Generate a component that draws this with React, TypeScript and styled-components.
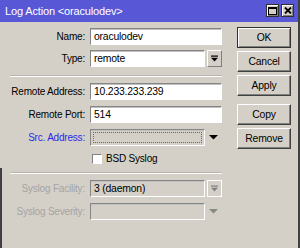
import styled, { createGlobalStyle, css } from 'styled-components';

const GlobalStyle = createGlobalStyle`
  html, body {
    margin: 0;
    padding: 0;
    background: #d4d0c8;
  }
  * { box-sizing: border-box; }
`;

const font = css`
  font-family: "Liberation Sans", Arial, sans-serif;
  font-size: 10px;
  letter-spacing: -0.2px;
`;

const Window = styled.div`
  position: relative;
  width: 300px;
  height: 248px;
  background: #d4d0c8;
  border-right: 2px solid #404040;
  display: flex;
  flex-direction: column;
  overflow: hidden;
  ${font};
`;

const EdgeShadow = styled.div`
  position: absolute;
  left: 0;
  top: 168px;
  bottom: 0;
  width: 2px;
  background: #404040;
`;

const TitleBar = styled.div`
  height: 22px;
  background: #5858d6;
  display: flex;
  align-items: center;
  padding: 0 4px 1px 5px;
  color: #fff;
  font-size: 11px;
  letter-spacing: -0.15px;
`;

const TitleButtons = styled.div`
  margin-left: auto;
  display: flex;
  gap: 2px;
`;

const TitleButton = styled.div`
  width: 13px;
  height: 13px;
  background: #d4d0c8;
  border: 1px solid #303030;
  box-shadow: inset 1px 1px 0 #fff, inset -1px -1px 0 #808080;
  display: flex;
  align-items: center;
  justify-content: center;
`;

const Body = styled.div`
  display: flex;
  padding-top: 6px;
`;

const Form = styled.div`
  width: 226px;
  display: flex;
  flex-direction: column;
`;

const Row = styled.div<{ $mt?: number }>`
  display: flex;
  align-items: center;
  height: 17px;
  margin-top: ${(p) => p.$mt ?? 0}px;
`;

const Label = styled.div<{ $tone?: 'normal' | 'link' | 'disabled' }>`
  width: 85px;
  margin-right: 5px;
  text-align: right;
  white-space: nowrap;
  color: ${(p) =>
    p.$tone === 'link' ? '#2a2ae8' : p.$tone === 'disabled' ? '#a4a4a4' : '#000'};
`;

const Field = styled.div<{ $w: number; $variant?: 'white' | 'gray' | 'dotted' }>`
  width: ${(p) => p.$w}px;
  height: 17px;
  padding: 0 3px;
  display: flex;
  align-items: center;
  white-space: nowrap;
  overflow: hidden;
  font-size: 10.4px;
  background: ${(p) => (p.$variant === 'white' || !p.$variant ? '#fff' : '#d4d0c8')};
  border-top: 1px solid #858585;
  border-left: 1px solid #858585;
  border-bottom: 1px solid #fff;
  border-right: 1px solid #fff;
  box-shadow: inset 0 1px 0 #c0c0c0;
  position: relative;
  ${(p) =>
    p.$variant === 'dotted' &&
    css`
      &::after {
        content: '';
        position: absolute;
        inset: 2px;
        border: 1px dotted #6a6a6a;
      }
    `}
`;

const DropButton = styled.div<{ $disabled?: boolean }>`
  width: 15px;
  height: 17px;
  margin-left: 2px;
  background: #d4d0c8;
  border-top: 1px solid #fff;
  border-left: 1px solid #fff;
  border-right: 1px solid ${(p) => (p.$disabled ? '#fff' : '#808080')};
  border-bottom: 1px solid ${(p) => (p.$disabled ? '#fff' : '#808080')};
  display: flex;
  align-items: center;
  justify-content: center;
`;

const ArrowSlot = styled.div`
  width: 17px;
  height: 17px;
  display: flex;
  align-items: center;
  justify-content: center;
`;

const Separator = styled.div<{ $mt: number }>`
  margin: ${(p) => p.$mt}px 0 0 10px;
  width: 212px;
  height: 2px;
  border-top: 1px solid #b8b4ac;
  border-bottom: 1px solid #fff;
`;

const CheckRow = styled.label`
  display: flex;
  align-items: center;
  gap: 4px;
  margin-top: 7px;
  padding-left: 92px;
  height: 11px;
`;

const CheckBox = styled.span`
  width: 10px;
  height: 10px;
  background: #fff;
  border-top: 1px solid #808080;
  border-left: 1px solid #808080;
  border-bottom: 1px solid #fff;
  border-right: 1px solid #fff;
`;

const Side = styled.div`
  margin-left: 11px;
  margin-top: -1px;
  width: 54px;
  display: flex;
  flex-direction: column;
  gap: 3px;
`;

const Button = styled.div<{ $primary?: boolean; $mt?: number }>`
  height: 21px;
  margin-top: ${(p) => p.$mt ?? 0}px;
  display: flex;
  align-items: center;
  justify-content: center;
  background: #d4d0c8;
  color: #000;
  font-size: 10.4px;
  border: 1px solid;
  border-color: ${(p) => (p.$primary ? '#303030' : '#fff #404040 #404040 #fff')};
  box-shadow: ${(p) =>
    p.$primary
      ? 'inset 1px 1px 0 #fff, inset -1px -1px 0 #808080'
      : 'inset -1px -1px 0 #808080'};
`;

const DropIcon = ({ color = '#000' }: { color?: string }) => (
  <svg width="7" height="7" viewBox="0 0 7 7">
    <rect x="0" y="0.5" width="7" height="1.2" fill={color} />
    <path d="M0 2.8H7L3.5 6.5Z" fill={color} />
  </svg>
);

const Triangle = ({ color = '#000' }: { color?: string }) => (
  <svg width="9" height="5" viewBox="0 0 9 5">
    <path d="M0 0H9L4.5 4.5Z" fill={color} />
  </svg>
);

export default function App() {
  return (
    <>
      <GlobalStyle />
      <Window>
        <TitleBar>
          <span>Log Action &lt;oraculodev&gt;</span>
          <TitleButtons>
            <TitleButton>
              <svg width="9" height="8" viewBox="0 0 9 8">
                <rect x="0.5" y="0.5" width="8" height="7" fill="none" stroke="#000" />
                <rect x="0" y="0" width="9" height="2" fill="#000" />
              </svg>
            </TitleButton>
            <TitleButton>
              <svg width="8" height="7" viewBox="0 0 8 7">
                <path d="M1 0.5L7 6.5M7 0.5L1 6.5" stroke="#000" strokeWidth="1.8" />
              </svg>
            </TitleButton>
          </TitleButtons>
        </TitleBar>
        <Body>
          <Form>
            <Row>
              <Label>Name:</Label>
              <Field $w={132}>oraculodev</Field>
            </Row>
            <Row $mt={5}>
              <Label>Type:</Label>
              <Field $w={115}>remote</Field>
              <DropButton>
                <DropIcon />
              </DropButton>
            </Row>
            <Separator $mt={8} />
            <Row $mt={6}>
              <Label>Remote Address:</Label>
              <Field $w={132}>10.233.233.239</Field>
            </Row>
            <Row $mt={6}>
              <Label>Remote Port:</Label>
              <Field $w={132}>514</Field>
            </Row>
            <Row $mt={6}>
              <Label $tone="link">Src. Address:</Label>
              <Field $w={115} $variant="dotted" />
              <ArrowSlot>
                <Triangle />
              </ArrowSlot>
            </Row>
            <CheckRow>
              <CheckBox />
              <span>BSD Syslog</span>
            </CheckRow>
            <Separator $mt={8} />
            <Row $mt={6}>
              <Label $tone="disabled">Syslog Facility:</Label>
              <Field $w={115} $variant="gray">3 (daemon)</Field>
              <DropButton $disabled>
                <DropIcon color="#808080" />
              </DropButton>
            </Row>
            <Row $mt={6}>
              <Label $tone="disabled">Syslog Severity:</Label>
              <Field $w={115} $variant="gray" />
              <ArrowSlot>
                <Triangle color="#848a84" />
              </ArrowSlot>
            </Row>
          </Form>
          <Side>
            <Button $primary>OK</Button>
            <Button>Cancel</Button>
            <Button>Apply</Button>
            <Button $mt={5}>Copy</Button>
            <Button>Remove</Button>
          </Side>
        </Body>
        <EdgeShadow />
      </Window>
    </>
  );
}
